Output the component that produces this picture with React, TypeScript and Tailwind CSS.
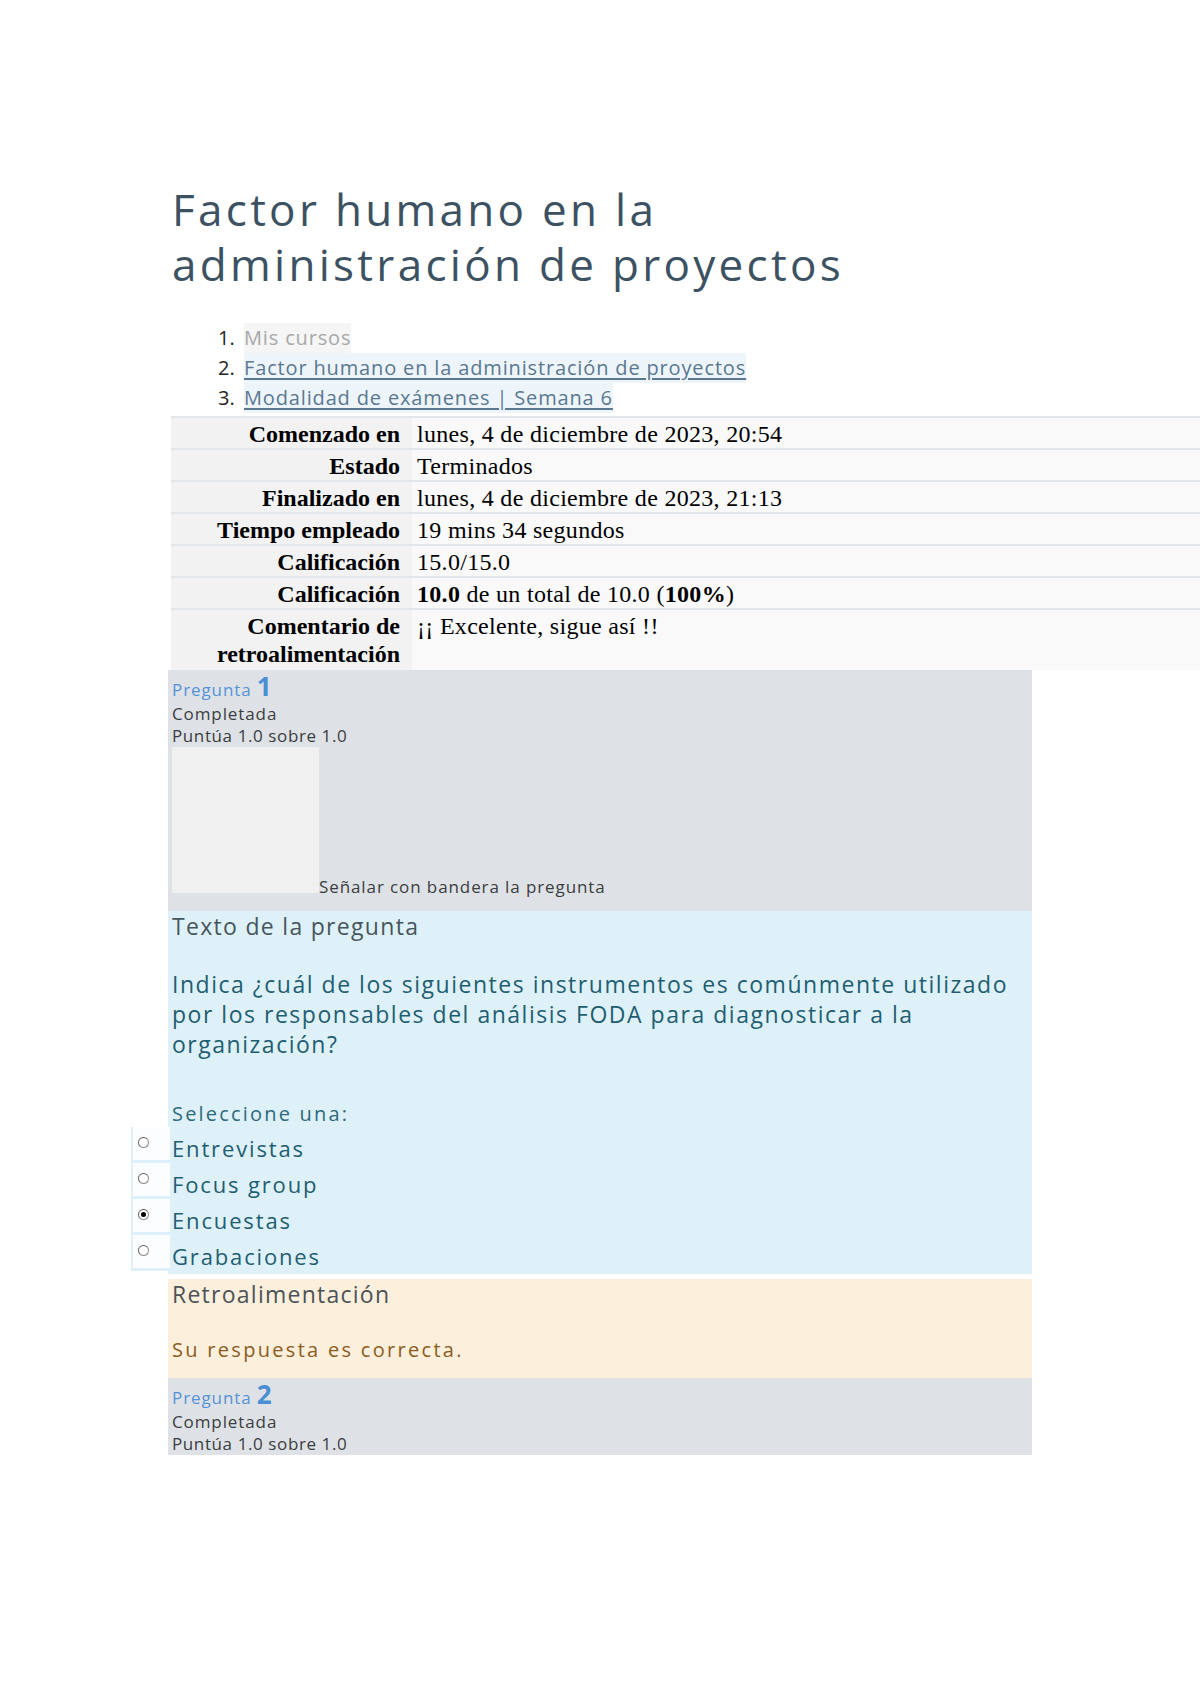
const sans = "font-['Open_Sans','Noto_Sans',sans-serif]";

const summary = [
  { id: 1, label: "Comenzado en", value: <>lunes, 4 de diciembre de 2023, 20:54</> },
  { id: 2, label: "Estado", value: <>Terminados</> },
  { id: 3, label: "Finalizado en", value: <>lunes, 4 de diciembre de 2023, 21:13</> },
  { id: 4, label: "Tiempo empleado", value: <>19 mins 34 segundos</> },
  { id: 5, label: "Calificación", value: <>15.0/15.0</> },
  {
    id: 6,
    label: "Calificación",
    value: (
      <>
        <b>10.0</b> de un total de 10.0 (<b>100%</b>)
      </>
    ),
  },
];

const options = [
  { id: 1, label: "Entrevistas", checked: false },
  { id: 2, label: "Focus group", checked: false },
  { id: 3, label: "Encuestas", checked: true },
  { id: 4, label: "Grabaciones", checked: false },
];

function QuestionInfo({ number, children }: { number: number; children?: React.ReactNode }) {
  return (
    <div className="bg-[#dee2e6] pl-[4px] pt-[3px] text-[17px] leading-[22px] tracking-[0.9px] text-[#3a3d40]">
      <div className="leading-[26px]">
        <span className="text-[#5592d6]">Pregunta </span>
        <span className="text-[26px] font-bold tracking-normal text-[#4a8ed4]">{number}</span>
      </div>
      <div>Completada</div>
      <div className="tracking-[0.6px]">Puntúa 1.0 sobre 1.0</div>
      {children}
    </div>
  );
}

function Radio({ checked }: { checked: boolean }) {
  return (
    <span className="mt-[10px] ml-[5px] flex h-[11px] w-[11px] items-center justify-center rounded-full border border-[#8c8c8c] border-t-[#5a5a5a] border-l-[#6a6a6a] bg-white">
      {checked && <span className="h-[5px] w-[5px] rounded-full bg-black" />}
    </span>
  );
}

export default function App() {
  return (
    <div className={`min-h-[1696px] w-[1200px] overflow-hidden bg-white pl-[168px] ${sans}`}>
      <h1 className="pt-[182px] pl-[4px] text-[44px] leading-[55px] font-normal tracking-[3.3px] text-[#3c5262]">
        Factor humano en la
        <br />
        administración de proyectos
      </h1>

      <ol className="mt-[31px] text-[20px] leading-[30px]">
        <li className="flex pl-[50px]">
          <span className="w-[26px] text-[#222]">1.</span>
          <span className="bg-[#f5f5f5] tracking-[0.85px] text-[#a8a8a8]">Mis cursos</span>
        </li>
        <li className="flex pl-[50px]">
          <span className="w-[26px] text-[#222]">2.</span>
          <a className="bg-[#eef5fa] tracking-[0.85px] text-[#5a7891] underline decoration-[#5a7891] underline-offset-[3px]">
            Factor humano en la administración de proyectos
          </a>
        </li>
        <li className="flex pl-[50px]">
          <span className="w-[26px] text-[#222]">3.</span>
          <a className="bg-[#eef5fa] tracking-[0.85px] text-[#5a7891] underline decoration-[#5a7891] underline-offset-[3px]">
            Modalidad de exámenes | Semana 6
          </a>
        </li>
      </ol>

      <div className="mt-[3px] ml-[3px] w-[1029px] font-['Liberation_Serif',serif] text-[24px] leading-[28px] text-black">
        {summary.map((row) => (
          <div key={row.id} className="grid grid-cols-[241px_1fr] border-t-2 border-[#e3e7eb]">
            <div className="bg-[#f2f2f2] pt-[2px] pr-[12px] text-right font-bold">{row.label}</div>
            <div className="bg-[#f9f9f9] pt-[2px] pl-[5px] tracking-[0.3px]">{row.value}</div>
          </div>
        ))}
        <div className="grid grid-cols-[241px_1fr] border-t-2 border-[#e3e7eb]">
          <div className="bg-[#f2f2f2] pt-[2px] pr-[12px] pb-[2px] text-right font-bold">
            Comentario de
            <br />
            retroalimentación
          </div>
          <div className="bg-[#f9f9f9] pt-[2px] pl-[5px] tracking-[0.3px]">¡¡ Excelente, sigue así !!</div>
        </div>
      </div>

      <div className="w-[864px]">
        <QuestionInfo number={1}>
          <div className="pb-[13px]">
            <span className="inline-block h-[146px] w-[147px] bg-[#f0f0f0] align-baseline" />
            <span>Señalar con bandera la pregunta</span>
          </div>
        </QuestionInfo>

        <div className="bg-[#def1f8] pl-[4px] pb-[3px]">
          <div className="text-[23px] leading-[30px] tracking-[1.3px] text-[#47565d]">Texto de la pregunta</div>
          <p className="mt-[28px] pr-[8px] text-[23px] leading-[30px] tracking-[1.52px] text-[#1f5e72]">
            Indica ¿cuál de los siguientes instrumentos es comúnmente utilizado por los responsables del
            análisis FODA para diagnosticar a la organización?
          </p>
          <div className="mt-[42px] text-[20px] leading-[26px] tracking-[2.2px] text-[#2c6a7c]">Seleccione una:</div>
          <div className="ml-[-41px] bg-[#def1f8] pl-[2px]">
            {options.map((option) => (
              <div key={option.id} className="flex h-[36px] items-start">
                <div className="h-[33px] w-[37px] bg-[#fbfdfe]">
                  <Radio checked={option.checked} />
                </div>
                <span className="ml-[2px] pt-[6px] text-[22px] leading-[30px] tracking-[1.85px] text-[#1f5e72]">
                  {option.label}
                </span>
              </div>
            ))}
          </div>
        </div>

        <div className="mt-[5px] bg-[#fcefdc] pl-[4px] pb-[15px]">
          <div className="text-[23px] leading-[30px] tracking-[1.25px] text-[#4c5358]">Retroalimentación</div>
          <div className="mt-[28px] text-[20px] leading-[26px] tracking-[2.3px] text-[#8a5c22]">
            Su respuesta es correcta.
          </div>
        </div>

        <QuestionInfo number={2} />
      </div>
    </div>
  );
}
